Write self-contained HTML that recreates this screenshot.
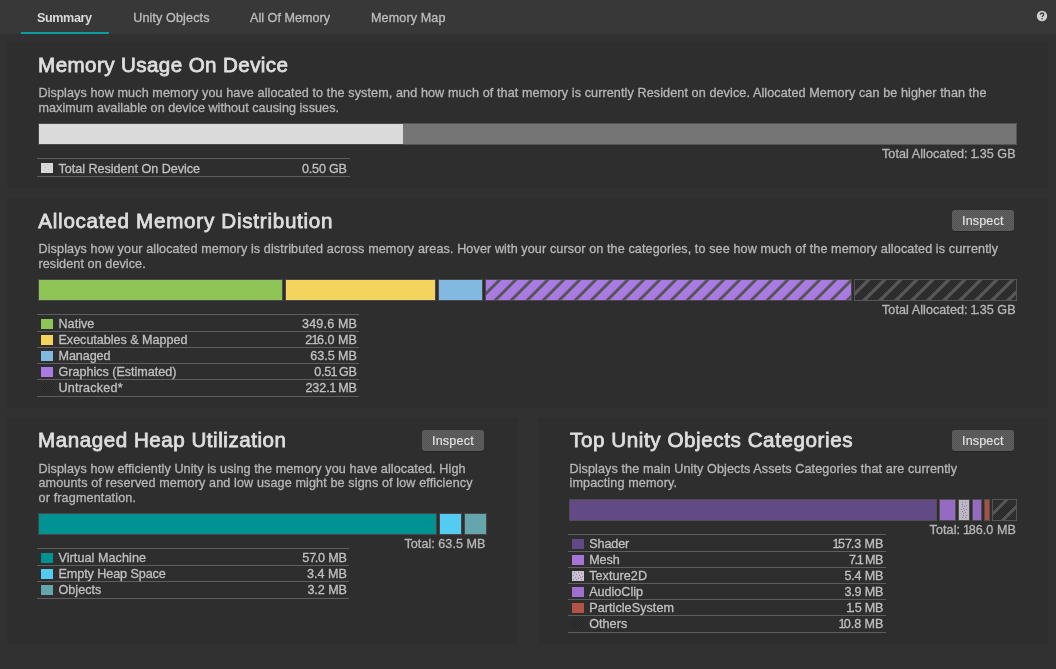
<!DOCTYPE html>
<html lang="en"><head><meta charset="utf-8"><title>Memory Profiler - Summary</title>
<style>
html,body{margin:0;padding:0}
body{width:1056px;height:669px;position:relative;overflow:hidden;background:#313131;font-family:"Liberation Sans",sans-serif;color:#b7b7b7}
.a{position:absolute}
.t{position:absolute;white-space:pre;line-height:normal}
.p{position:absolute;background:#2e2e2e}
.ln{position:absolute;height:1px;background:#5e5e5e}
.sw{position:absolute;width:12px;height:10px}
.btn{position:absolute;box-sizing:border-box;background:#5a5a5a repeating-conic-gradient(#5f5f5f 0 25%,#565656 0 50%) 0 0/2px 2px;box-shadow:0 1px 0 #252525;border-radius:3px}
svg{position:absolute;display:block}
</style></head><body>
<svg width="0" height="0" style="left:0;top:0"><defs><pattern id="dith" width="2" height="2" patternUnits="userSpaceOnUse"><rect width="2" height="2" fill="#343434"/><rect width="1" height="1" fill="#272727"/><rect x="1" y="1" width="1" height="1" fill="#272727"/></pattern><pattern id="dith2" width="2" height="2" patternUnits="userSpaceOnUse"><rect width="2" height="2" fill="#323232"/><rect width="1" height="1" fill="#262626"/><rect x="1" y="1" width="1" height="1" fill="#262626"/></pattern></defs></svg>
<div class="a" style="left:0;top:0;width:1056px;height:34px;background:#383838"></div>
<div class="a" style="left:21px;top:32px;width:88px;height:2px;background:#0a9da4"></div>
<svg style="left:1036px;top:10px" width="12" height="12" viewBox="0 0 12 12"><circle cx="6" cy="6" r="5.2" fill="#d0d0d0"/><path d="M4.3 4.7 C4.3 3.5 5.1 3 6 3 C7 3 7.7 3.6 7.7 4.5 C7.7 5.6 6.1 5.7 6.1 7" fill="none" stroke="#363636" stroke-width="1.3"/><circle cx="6.1" cy="8.7" r="0.8" fill="#363636"/></svg>
<div class="p" style="left:7px;top:42px;width:1041px;height:146px"></div>
<div class="p" style="left:7px;top:198px;width:1041px;height:210px"></div>
<div class="p" style="left:7px;top:418px;width:511px;height:226px"></div>
<div class="p" style="left:538px;top:418px;width:510px;height:226px"></div>
<div class="a" style="left:38px;top:123px;width:979.00px;height:22.00px;box-sizing:border-box;background:#757575;border:1px solid #555555"></div>
<div class="a" style="left:39px;top:124px;width:364.3px;height:20px;background:#dadada"></div>
<div class="a" style="left:38px;top:123px;width:365.3px;height:22px;box-sizing:border-box;border:1px solid #4a4a4a;border-right:0"></div>
<div class="a" style="left:38px;top:279px;width:245.00px;height:22.00px;box-sizing:border-box;background:#8ec556;border:1px solid #4a474e"></div>
<div class="a" style="left:285px;top:279px;width:151.00px;height:22.00px;box-sizing:border-box;background:#f4d45d;border:1px solid #4a474e"></div>
<div class="a" style="left:438px;top:279px;width:45.00px;height:22.00px;box-sizing:border-box;background:#82b9e1;border:1px solid #4a474e"></div>
<svg style="left:485px;top:279px" width="367.00" height="22.00" viewBox="0 0 367.00 22.00"><rect x="0" y="0" width="367.00" height="22.00" fill="#a97be2"/><path d="M-38.50 22.00L-16.50 0M-22.50 22.00L-0.50 0M-6.50 22.00L15.50 0M9.50 22.00L31.50 0M25.50 22.00L47.50 0M41.50 22.00L63.50 0M57.50 22.00L79.50 0M73.50 22.00L95.50 0M89.50 22.00L111.50 0M105.50 22.00L127.50 0M121.50 22.00L143.50 0M137.50 22.00L159.50 0M153.50 22.00L175.50 0M169.50 22.00L191.50 0M185.50 22.00L207.50 0M201.50 22.00L223.50 0M217.50 22.00L239.50 0M233.50 22.00L255.50 0M249.50 22.00L271.50 0M265.50 22.00L287.50 0M281.50 22.00L303.50 0M297.50 22.00L319.50 0M313.50 22.00L335.50 0M329.50 22.00L351.50 0M345.50 22.00L367.50 0M361.50 22.00L383.50 0M377.50 22.00L399.50 0" stroke="#555555" stroke-width="3.0" fill="none"/><rect x="0.5" y="0.5" width="366.00" height="21.00" fill="none" stroke="#4a474e" stroke-width="1"/></svg>
<svg style="left:854px;top:279px" width="163.00" height="22.00" viewBox="0 0 163.00 22.00"><rect x="0" y="0" width="163.00" height="22.00" fill="url(#dith)"/><path d="M-38.60 22.00L-16.60 0M-22.60 22.00L-0.60 0M-6.60 22.00L15.40 0M9.40 22.00L31.40 0M25.40 22.00L47.40 0M41.40 22.00L63.40 0M57.40 22.00L79.40 0M73.40 22.00L95.40 0M89.40 22.00L111.40 0M105.40 22.00L127.40 0M121.40 22.00L143.40 0M137.40 22.00L159.40 0M153.40 22.00L175.40 0M169.40 22.00L191.40 0" stroke="#585858" stroke-width="3.2" fill="none"/><rect x="0.5" y="0.5" width="162.00" height="21.00" fill="none" stroke="#555555" stroke-width="1"/></svg>
<div class="a" style="left:38px;top:513px;width:399.00px;height:22.00px;box-sizing:border-box;background:#009192;border:1px solid #4a4545"></div>
<div class="a" style="left:439px;top:513px;width:23.00px;height:22.00px;box-sizing:border-box;background:#54ccf2;border:1px solid #4a4545"></div>
<div class="a" style="left:464px;top:513px;width:23.00px;height:22.00px;box-sizing:border-box;background:#65a6ad;border:1px solid #4a4545"></div>
<div class="a" style="left:569px;top:499px;width:368.00px;height:22.00px;box-sizing:border-box;background:#624a87;border:1px solid #4f4f4f"></div>
<div class="a" style="left:939px;top:499px;width:17.00px;height:22.00px;box-sizing:border-box;background:#966ac2;border:1px solid #4f4f4f"></div>
<svg style="left:958px;top:499px" width="12.00" height="22.00" viewBox="0 0 12.00 22.00"><rect x="0" y="0" width="12.00" height="22.00" fill="#bab9bc"/><rect x="4" y="3" width="1" height="1" fill="#a468e8"/><rect x="7" y="3" width="1" height="1" fill="#a468e8"/><rect x="4" y="5" width="1" height="1" fill="#a468e8"/><rect x="8" y="6" width="1" height="1" fill="#a468e8"/><rect x="4" y="7" width="1" height="1" fill="#a468e8"/><rect x="6" y="7" width="1" height="1" fill="#a468e8"/><rect x="5" y="9" width="1" height="1" fill="#a468e8"/><rect x="3" y="10" width="1" height="1" fill="#a468e8"/><rect x="8" y="10" width="1" height="1" fill="#a468e8"/><rect x="6" y="11" width="1" height="1" fill="#a468e8"/><rect x="4" y="12" width="1" height="1" fill="#a468e8"/><rect x="7" y="13" width="1" height="1" fill="#a468e8"/><rect x="5" y="14" width="1" height="1" fill="#a468e8"/><rect x="5" y="16" width="1" height="1" fill="#a468e8"/><rect x="8" y="16" width="1" height="1" fill="#a468e8"/><rect x="4" y="18" width="1" height="1" fill="#a468e8"/><rect x="7" y="18" width="1" height="1" fill="#a468e8"/><path d="M-958.00 22.00L-939.20 0M-942.00 22.00L-923.20 0M-926.00 22.00L-907.20 0M-910.00 22.00L-891.20 0M-894.00 22.00L-875.20 0M-878.00 22.00L-859.20 0M-862.00 22.00L-843.20 0M-846.00 22.00L-827.20 0M-830.00 22.00L-811.20 0M-814.00 22.00L-795.20 0M-798.00 22.00L-779.20 0M-782.00 22.00L-763.20 0M-766.00 22.00L-747.20 0M-750.00 22.00L-731.20 0M-734.00 22.00L-715.20 0M-718.00 22.00L-699.20 0M-702.00 22.00L-683.20 0M-686.00 22.00L-667.20 0M-670.00 22.00L-651.20 0M-654.00 22.00L-635.20 0M-638.00 22.00L-619.20 0M-622.00 22.00L-603.20 0M-606.00 22.00L-587.20 0M-590.00 22.00L-571.20 0M-574.00 22.00L-555.20 0M-558.00 22.00L-539.20 0M-542.00 22.00L-523.20 0M-526.00 22.00L-507.20 0M-510.00 22.00L-491.20 0M-494.00 22.00L-475.20 0M-478.00 22.00L-459.20 0M-462.00 22.00L-443.20 0M-446.00 22.00L-427.20 0M-430.00 22.00L-411.20 0M-414.00 22.00L-395.20 0M-398.00 22.00L-379.20 0M-382.00 22.00L-363.20 0M-366.00 22.00L-347.20 0M-350.00 22.00L-331.20 0M-334.00 22.00L-315.20 0M-318.00 22.00L-299.20 0M-302.00 22.00L-283.20 0M-286.00 22.00L-267.20 0M-270.00 22.00L-251.20 0M-254.00 22.00L-235.20 0M-238.00 22.00L-219.20 0M-222.00 22.00L-203.20 0M-206.00 22.00L-187.20 0M-190.00 22.00L-171.20 0M-174.00 22.00L-155.20 0M-158.00 22.00L-139.20 0M-142.00 22.00L-123.20 0M-126.00 22.00L-107.20 0M-110.00 22.00L-91.20 0M-94.00 22.00L-75.20 0M-78.00 22.00L-59.20 0M-62.00 22.00L-43.20 0M-46.00 22.00L-27.20 0M-30.00 22.00L-11.20 0M-14.00 22.00L4.80 0M2.00 22.00L20.80 0M18.00 22.00L36.80 0" stroke="none" stroke-width="2.9" fill="none"/><rect x="0.5" y="0.5" width="11.00" height="21.00" fill="none" stroke="#4f4f4f" stroke-width="1"/></svg>
<div class="a" style="left:972px;top:499px;width:10.00px;height:22.00px;box-sizing:border-box;background:#966ac2;border:1px solid #4f4f4f"></div>
<div class="a" style="left:984px;top:499px;width:6.00px;height:22.00px;box-sizing:border-box;background:#a9503f;border:1px solid #4f4f4f"></div>
<svg style="left:992px;top:499px" width="25.00" height="22.00" viewBox="0 0 25.00 22.00"><rect x="0" y="0" width="25.00" height="22.00" fill="url(#dith)"/><path d="M-39.50 22.00L-17.50 0M-23.00 22.00L-1.00 0M-6.50 22.00L15.50 0M10.00 22.00L32.00 0M26.50 22.00L48.50 0" stroke="#585858" stroke-width="3.0" fill="none"/><rect x="0.5" y="0.5" width="24.00" height="21.00" fill="none" stroke="#555555" stroke-width="1"/></svg>
<div class="ln" style="left:37px;top:158px;width:313.00px"></div>
<div class="ln" style="left:37px;top:176px;width:313.00px"></div>
<svg style="left:41px;top:163px" width="12" height="10"><rect width="12" height="10" fill="#d9d9d9"/><rect x="2" y="2" width="1" height="1" fill="#c2c2c2"/><rect x="6" y="1" width="1" height="1" fill="#c2c2c2"/><rect x="9" y="3" width="1" height="1" fill="#c2c2c2"/><rect x="4" y="4" width="1" height="1" fill="#c2c2c2"/><rect x="7" y="6" width="1" height="1" fill="#c2c2c2"/><rect x="2" y="7" width="1" height="1" fill="#c2c2c2"/><rect x="10" y="7" width="1" height="1" fill="#c2c2c2"/><rect x="5" y="8" width="1" height="1" fill="#c2c2c2"/></svg>
<div class="ln" style="left:37px;top:314px;width:322.00px"></div>
<div class="ln" style="left:37px;top:331px;width:322.00px"></div>
<div class="ln" style="left:37px;top:347px;width:322.00px"></div>
<div class="ln" style="left:37px;top:363px;width:322.00px"></div>
<div class="ln" style="left:37px;top:379px;width:322.00px"></div>
<div class="ln" style="left:37px;top:396px;width:322.00px"></div>
<div class="sw" style="left:41px;top:319px;background:#8ec556"></div>
<div class="sw" style="left:41px;top:335px;background:#f4d45d"></div>
<div class="sw" style="left:41px;top:351px;background:#82b9e1"></div>
<div class="sw" style="left:41px;top:367px;background:#a97be2"></div>
<svg style="left:41px;top:383px" width="12" height="10"><rect width="12" height="10" fill="url(#dith2)"/></svg>
<div class="ln" style="left:37px;top:548px;width:312.00px"></div>
<div class="ln" style="left:37px;top:565px;width:312.00px"></div>
<div class="ln" style="left:37px;top:581px;width:312.00px"></div>
<div class="ln" style="left:37px;top:598px;width:312.00px"></div>
<div class="sw" style="left:41px;top:553px;background:#009192"></div>
<div class="sw" style="left:41px;top:569px;background:#54ccf2"></div>
<div class="sw" style="left:41px;top:585px;background:#65a6ad"></div>
<div class="ln" style="left:568px;top:534px;width:318.00px"></div>
<div class="ln" style="left:568px;top:551px;width:318.00px"></div>
<div class="ln" style="left:568px;top:567px;width:318.00px"></div>
<div class="ln" style="left:568px;top:583px;width:318.00px"></div>
<div class="ln" style="left:568px;top:599px;width:318.00px"></div>
<div class="ln" style="left:568px;top:615px;width:318.00px"></div>
<div class="ln" style="left:568px;top:632px;width:318.00px"></div>
<div class="sw" style="left:572px;top:539px;background:#614986"></div>
<div class="sw" style="left:572px;top:555px;background:#a574d6"></div>
<svg style="left:572px;top:571px" width="12" height="10"><rect width="12" height="10" fill="#c4c4c6"/><rect x="2" y="1" width="1" height="1" fill="#a874e0"/><rect x="6" y="1" width="1" height="1" fill="#a874e0"/><rect x="9" y="2" width="1" height="1" fill="#a874e0"/><rect x="4" y="3" width="1" height="1" fill="#a874e0"/><rect x="1" y="4" width="1" height="1" fill="#a874e0"/><rect x="7" y="4" width="1" height="1" fill="#a874e0"/><rect x="10" y="5" width="1" height="1" fill="#a874e0"/><rect x="3" y="6" width="1" height="1" fill="#a874e0"/><rect x="6" y="7" width="1" height="1" fill="#a874e0"/><rect x="9" y="8" width="1" height="1" fill="#a874e0"/><rect x="1" y="8" width="1" height="1" fill="#a874e0"/><rect x="4" y="8" width="1" height="1" fill="#a874e0"/><rect x="8" y="6" width="1" height="1" fill="#a874e0"/></svg>
<div class="sw" style="left:572px;top:587px;background:#a06fd0"></div>
<div class="sw" style="left:572px;top:603px;background:#b35346"></div>
<svg style="left:572px;top:619px" width="12" height="10"><rect width="12" height="10" fill="url(#dith2)"/></svg>
<div class="btn" style="left:952px;top:210px;width:62px;height:21px"></div>
<div class="btn" style="left:422px;top:430px;width:62px;height:21px"></div>
<div class="btn" style="left:952px;top:430px;width:62px;height:21px"></div>
<div class="a" style="left:0;top:0;width:1056px;height:669px;will-change:transform">
<span class="t" style="left:37.00px;top:11.00px;font-size:12.6px;letter-spacing:-0.401px;color:#dadada;font-weight:700">Summary</span>
<span class="t" style="left:133.20px;top:11.00px;font-size:12.6px;letter-spacing:0.117px;color:#bebebe;-webkit-text-stroke:0.3px #bebebe">Unity Objects</span>
<span class="t" style="left:250.00px;top:11.00px;font-size:12.6px;letter-spacing:0.018px;color:#bebebe;-webkit-text-stroke:0.3px #bebebe">All Of Memory</span>
<span class="t" style="left:371.00px;top:11.00px;font-size:12.6px;letter-spacing:0.113px;color:#bebebe;-webkit-text-stroke:0.3px #bebebe">Memory Map</span>
<span class="t" style="left:38.10px;top:53.00px;font-size:20.6px;letter-spacing:0.401px;color:#dedede;-webkit-text-stroke:0.8px #dedede">Memory Usage On Device</span>
<span class="t" style="left:38.50px;top:86.00px;font-size:12.6px;letter-spacing:0.103px;color:#b7b7b7;-webkit-text-stroke:0.3px #b7b7b7">Displays how much memory you have allocated to the system, and how much of that memory is currently Resident on device. Allocated Memory can be higher than the</span>
<span class="t" style="left:38.50px;top:101.00px;font-size:12.6px;letter-spacing:0.046px;color:#b7b7b7;-webkit-text-stroke:0.3px #b7b7b7">maximum available on device without causing issues.</span>
<span class="t" style="left:882.00px;top:147.00px;font-size:12.6px;letter-spacing:0.055px;color:#b7b7b7;-webkit-text-stroke:0.3px #b7b7b7">Total Allocated: <b style="font-weight:inherit;margin:0 -1.5px 0 -0.6px">1</b>.35 GB</span>
<span class="t" style="left:58.50px;top:162.00px;font-size:12.6px;letter-spacing:-0.026px;color:#c0c0c0;-webkit-text-stroke:0.3px #c0c0c0">Total Resident On Device</span>
<span class="t" style="left:302.00px;top:162.00px;font-size:12.6px;letter-spacing:-0.203px;color:#c0c0c0;-webkit-text-stroke:0.3px #c0c0c0">0.50 GB</span>
<span class="t" style="left:38.30px;top:209.00px;font-size:20.6px;letter-spacing:0.738px;color:#dedede;-webkit-text-stroke:0.8px #dedede">Allocated Memory Distribution</span>
<span class="t" style="left:38.50px;top:242.00px;font-size:12.6px;letter-spacing:0.110px;color:#b7b7b7;-webkit-text-stroke:0.3px #b7b7b7">Displays how your allocated memory is distributed across memory areas. Hover with your cursor on the categories, to see how much of the memory allocated is currently</span>
<span class="t" style="left:38.50px;top:257.00px;font-size:12.6px;letter-spacing:0.082px;color:#b7b7b7;-webkit-text-stroke:0.3px #b7b7b7">resident on device.</span>
<span class="t" style="left:882.00px;top:303.00px;font-size:12.6px;letter-spacing:0.055px;color:#b7b7b7;-webkit-text-stroke:0.3px #b7b7b7">Total Allocated: <b style="font-weight:inherit;margin:0 -1.5px 0 -0.6px">1</b>.35 GB</span>
<span class="t" style="left:58.50px;top:317.00px;font-size:12.6px;letter-spacing:0.019px;color:#c0c0c0;-webkit-text-stroke:0.3px #c0c0c0">Native</span>
<span class="t" style="left:302.00px;top:317.00px;font-size:12.6px;letter-spacing:0.156px;color:#c0c0c0;-webkit-text-stroke:0.3px #c0c0c0">349.6 MB</span>
<span class="t" style="left:58.50px;top:333.00px;font-size:12.6px;letter-spacing:-0.028px;color:#c0c0c0;-webkit-text-stroke:0.3px #c0c0c0">Executables &amp; Mapped</span>
<span class="t" style="left:305.20px;top:333.00px;font-size:12.6px;letter-spacing:-0.006px;color:#c0c0c0;-webkit-text-stroke:0.3px #c0c0c0">2<b style="font-weight:inherit;margin:0 -1.5px 0 -0.6px">1</b>6.0 MB</span>
<span class="t" style="left:58.50px;top:349.00px;font-size:12.6px;letter-spacing:-0.086px;color:#c0c0c0;-webkit-text-stroke:0.3px #c0c0c0">Managed</span>
<span class="t" style="left:310.20px;top:349.00px;font-size:12.6px;letter-spacing:-0.018px;color:#c0c0c0;-webkit-text-stroke:0.3px #c0c0c0">63.5 MB</span>
<span class="t" style="left:58.50px;top:365.00px;font-size:12.6px;letter-spacing:-0.015px;color:#c0c0c0;-webkit-text-stroke:0.3px #c0c0c0">Graphics (Estimated)</span>
<span class="t" style="left:314.20px;top:365.00px;font-size:12.6px;letter-spacing:-0.223px;color:#c0c0c0;-webkit-text-stroke:0.3px #c0c0c0">0.5<b style="font-weight:inherit;margin:0 -1.5px 0 -0.6px">1</b> GB</span>
<span class="t" style="left:58.50px;top:381.00px;font-size:12.6px;letter-spacing:0.199px;color:#c0c0c0;-webkit-text-stroke:0.3px #c0c0c0">Untracked*</span>
<span class="t" style="left:305.40px;top:381.00px;font-size:12.6px;letter-spacing:-0.033px;color:#c0c0c0;-webkit-text-stroke:0.3px #c0c0c0">232.<b style="font-weight:inherit;margin:0 -1.5px 0 -0.6px">1</b> MB</span>
<span class="t" style="left:38.10px;top:428.00px;font-size:20.6px;letter-spacing:0.525px;color:#dedede;-webkit-text-stroke:0.8px #dedede">Managed Heap Utilization</span>
<span class="t" style="left:38.50px;top:462.00px;font-size:12.6px;letter-spacing:0.098px;color:#b7b7b7;-webkit-text-stroke:0.3px #b7b7b7">Displays how efficiently Unity is using the memory you have allocated. High</span>
<span class="t" style="left:38.50px;top:476.00px;font-size:12.6px;letter-spacing:0.120px;color:#b7b7b7;-webkit-text-stroke:0.3px #b7b7b7">amounts of reserved memory and low usage might be signs of low efficiency</span>
<span class="t" style="left:38.50px;top:491.00px;font-size:12.6px;letter-spacing:0.143px;color:#b7b7b7;-webkit-text-stroke:0.3px #b7b7b7">or fragmentation.</span>
<span class="t" style="left:404.50px;top:537.00px;font-size:12.6px;letter-spacing:0.031px;color:#b7b7b7;-webkit-text-stroke:0.3px #b7b7b7">Total: 63.5 MB</span>
<span class="t" style="left:58.50px;top:551.00px;font-size:12.6px;letter-spacing:0.066px;color:#c0c0c0;-webkit-text-stroke:0.3px #c0c0c0">Virtual Machine</span>
<span class="t" style="left:302.30px;top:551.00px;font-size:12.6px;letter-spacing:-0.175px;color:#c0c0c0;-webkit-text-stroke:0.3px #c0c0c0">5<b style="font-weight:inherit;margin-right:-1.2px">7</b>.0 MB</span>
<span class="t" style="left:58.50px;top:567.00px;font-size:12.6px;letter-spacing:-0.081px;color:#c0c0c0;-webkit-text-stroke:0.3px #c0c0c0">Empty Heap Space</span>
<span class="t" style="left:307.00px;top:567.00px;font-size:12.6px;letter-spacing:0.019px;color:#c0c0c0;-webkit-text-stroke:0.3px #c0c0c0">3.4 MB</span>
<span class="t" style="left:58.50px;top:583.00px;font-size:12.6px;letter-spacing:0.033px;color:#c0c0c0;-webkit-text-stroke:0.3px #c0c0c0">Objects</span>
<span class="t" style="left:307.40px;top:583.00px;font-size:12.6px;letter-spacing:-0.061px;color:#c0c0c0;-webkit-text-stroke:0.3px #c0c0c0">3.2 MB</span>
<span class="t" style="left:570.00px;top:428.00px;font-size:20.6px;letter-spacing:0.585px;color:#dedede;-webkit-text-stroke:0.8px #dedede">Top Unity Objects Categories</span>
<span class="t" style="left:569.50px;top:462.00px;font-size:12.6px;letter-spacing:0.100px;color:#b7b7b7;-webkit-text-stroke:0.3px #b7b7b7">Displays the main Unity Objects Assets Categories that are currently</span>
<span class="t" style="left:569.50px;top:476.00px;font-size:12.6px;letter-spacing:0.128px;color:#b7b7b7;-webkit-text-stroke:0.3px #b7b7b7">impacting memory.</span>
<span class="t" style="left:929.60px;top:523.00px;font-size:12.6px;letter-spacing:0.062px;color:#b7b7b7;-webkit-text-stroke:0.3px #b7b7b7">Total: <b style="font-weight:inherit;margin:0 -1.5px 0 -0.6px">1</b>86.0 MB</span>
<span class="t" style="left:589.20px;top:537.00px;font-size:12.6px;letter-spacing:-0.105px;color:#c0c0c0;-webkit-text-stroke:0.3px #c0c0c0">Shader</span>
<span class="t" style="left:833.20px;top:537.00px;font-size:12.6px;letter-spacing:-0.067px;color:#c0c0c0;-webkit-text-stroke:0.3px #c0c0c0"><b style="font-weight:inherit;margin:0 -1.5px 0 -0.6px">1</b>5<b style="font-weight:inherit;margin-right:-1.2px">7</b>.3 MB</span>
<span class="t" style="left:589.20px;top:553.00px;font-size:12.6px;letter-spacing:-0.099px;color:#c0c0c0;-webkit-text-stroke:0.3px #c0c0c0">Mesh</span>
<span class="t" style="left:849.00px;top:553.00px;font-size:12.6px;letter-spacing:-0.448px;color:#c0c0c0;-webkit-text-stroke:0.3px #c0c0c0"><b style="font-weight:inherit;margin-right:-1.2px">7</b>.<b style="font-weight:inherit;margin:0 -1.5px 0 -0.6px">1</b> MB</span>
<span class="t" style="left:589.20px;top:569.00px;font-size:12.6px;letter-spacing:0.049px;color:#c0c0c0;-webkit-text-stroke:0.3px #c0c0c0">Texture2D</span>
<span class="t" style="left:844.50px;top:569.00px;font-size:12.6px;letter-spacing:-0.201px;color:#c0c0c0;-webkit-text-stroke:0.3px #c0c0c0">5.4 MB</span>
<span class="t" style="left:589.20px;top:585.00px;font-size:12.6px;letter-spacing:-0.013px;color:#c0c0c0;-webkit-text-stroke:0.3px #c0c0c0">AudioClip</span>
<span class="t" style="left:844.50px;top:585.00px;font-size:12.6px;letter-spacing:-0.201px;color:#c0c0c0;-webkit-text-stroke:0.3px #c0c0c0">3.9 MB</span>
<span class="t" style="left:589.20px;top:601.00px;font-size:12.6px;letter-spacing:0.063px;color:#c0c0c0;-webkit-text-stroke:0.3px #c0c0c0">ParticleSystem</span>
<span class="t" style="left:846.80px;top:601.00px;font-size:12.6px;letter-spacing:-0.246px;color:#c0c0c0;-webkit-text-stroke:0.3px #c0c0c0"><b style="font-weight:inherit;margin:0 -1.5px 0 -0.6px">1</b>.5 MB</span>
<span class="t" style="left:589.20px;top:617.00px;font-size:12.6px;letter-spacing:0.041px;color:#c0c0c0;-webkit-text-stroke:0.3px #c0c0c0">Others</span>
<span class="t" style="left:839.00px;top:617.00px;font-size:12.6px;letter-spacing:-0.071px;color:#c0c0c0;-webkit-text-stroke:0.3px #c0c0c0"><b style="font-weight:inherit;margin:0 -1.5px 0 -0.6px">1</b>0.8 MB</span>
<span class="t" style="left:962.00px;top:214.00px;font-size:12.6px;letter-spacing:0.132px;color:#e2e2e2;-webkit-text-stroke:0.15px #e2e2e2">Inspect</span>
<span class="t" style="left:432.00px;top:434.00px;font-size:12.6px;letter-spacing:0.182px;color:#e2e2e2;-webkit-text-stroke:0.15px #e2e2e2">Inspect</span>
<span class="t" style="left:962.00px;top:434.00px;font-size:12.6px;letter-spacing:0.132px;color:#e2e2e2;-webkit-text-stroke:0.15px #e2e2e2">Inspect</span>
</div>
</body></html>
